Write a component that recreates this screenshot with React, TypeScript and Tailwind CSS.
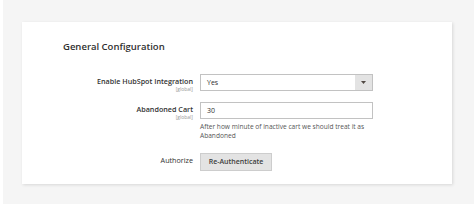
export default function App() {
  return (
    <div className="w-[474px] h-[207px] bg-white" style={{ fontFamily: '"Open Sans", sans-serif' }}>
      <div className="ml-[3px] h-[204px] bg-[#f5f5f5] pt-[22px] pl-[19px] pr-[22px]">
        <div className="h-[162px] w-[430px] bg-white shadow-[1px_1px_3px_rgba(0,0,0,0.12)] pl-[41px] pt-[19px]">
          <h2 className="text-[9.5px] font-semibold text-[#303030] leading-[12px]">General Configuration</h2>

          <div className="mt-[21px] flex flex-col">
            <div className="flex items-start">
              <div className="w-[137px] text-right pr-[7px] pt-[2px]">
                <div className="text-[7.2px] font-semibold text-[#333] leading-[10px]">Enable HubSpot Integration</div>
                <div className="text-[5px] text-[#999] leading-[7px]">[global]</div>
              </div>
              <div className="flex h-[17px] w-[173px] border border-[#c2c2c2] bg-white">
                <span className="flex-1 pl-[6px] text-[7px] leading-[15px] text-[#303030]">Yes</span>
                <span className="flex w-[17px] items-center justify-center bg-[#e3e3e3]">
                  <svg width="5" height="3" viewBox="0 0 5 3"><path d="M0 0h5L2.5 3z" fill="#514943" /></svg>
                </span>
              </div>
            </div>

            <div className="mt-[9px] flex items-start">
              <div className="w-[137px] text-right pr-[7px] pt-[2px]">
                <div className="text-[7.2px] font-semibold text-[#333] leading-[10px]">Abandoned Cart</div>
                <div className="text-[5px] text-[#999] leading-[7px]">[global]</div>
              </div>
              <div>
                <div className="h-[17px] w-[173px] border border-[#c2c2c2] bg-white pl-[6px] text-[7px] leading-[15px] text-[#303030]">30</div>
                <div className="mt-[3px] w-[165px] text-[6.6px] leading-[9px] text-[#555]">
                  After how minute of inactive cart we should treat it as Abandoned
                </div>
              </div>
            </div>

            <div className="mt-[13px] flex items-start">
              <div className="w-[137px] text-right pr-[7px] pt-[2px]">
                <div className="text-[7.2px] text-[#333] leading-[10px]">Authorize</div>
              </div>
              <button className="h-[18px] w-[72px] border border-[#cdcdcd] bg-[#e3e3e3] text-[7px] font-semibold text-[#3d3d3d]">
                Re-Authenticate
              </button>
            </div>
          </div>
        </div>
      </div>
    </div>
  )
}
